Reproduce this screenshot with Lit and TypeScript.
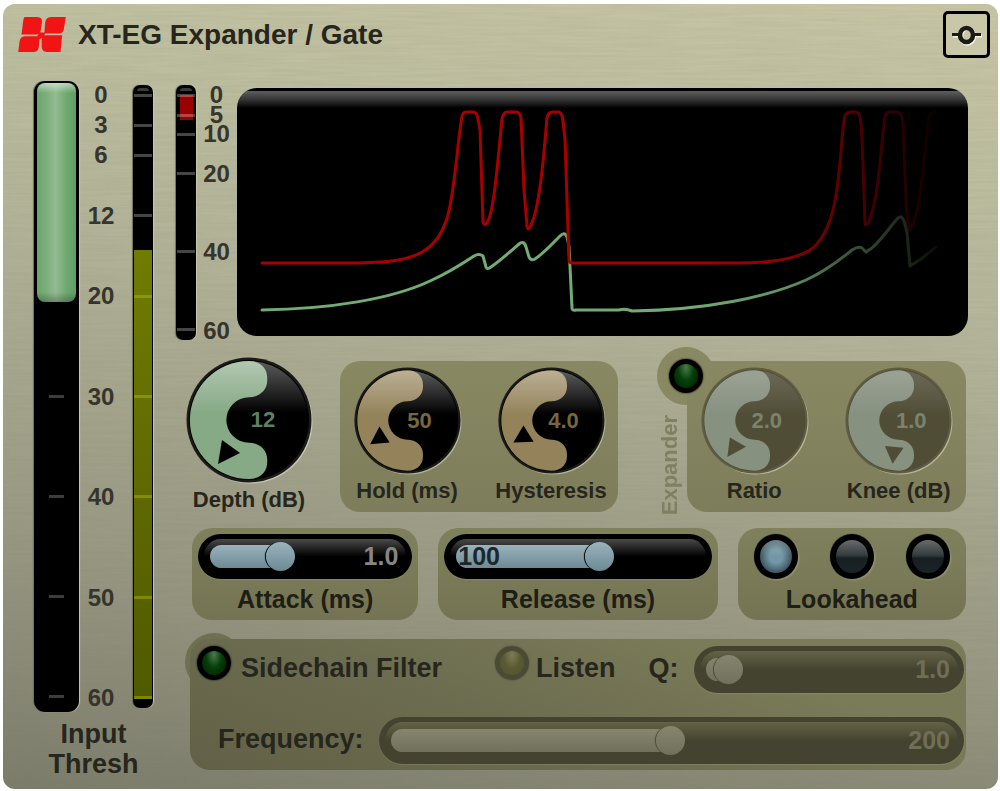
import { LitElement, html, svg, css } from "lit";
import { customElement, property } from "lit/decorators.js";

const INPUT_SCALE = [0, 3, 6, 12, 20, 30, 40, 50, 60];
const REDUCTION_SCALE = [0, 5, 10, 20, 40, 60];

/** A vertical scale in flow: every row is as tall as the distance to the next mark. */
const scaleRows = (marks: number[], cell: (mark: number) => unknown) =>
  marks.map((mark, i) => {
    const span = i < marks.length - 1 ? marks[i + 1] - mark : 0;
    return html`<li style="flex-grow:${span}">${cell(mark)}</li>`;
  });

const scaleStyles = css`
  ul {
    display: flex;
    flex-direction: column;
    list-style: none;
    margin: 0;
    padding: 0;
  }
  li {
    flex: 0 0 0px;
    line-height: 0;
    text-align: center;
  }
`;

@customElement("level-meter")
export class LevelMeter extends LitElement {
  @property({ attribute: false }) marks: number[] = [];
  @property({ type: Number }) from = 0;
  @property({ type: Number }) to = 0;
  @property() tone = "olive";

  static styles = [
    scaleStyles,
    css`
      :host {
        display: flex;
        flex-direction: column;
        box-sizing: border-box;
        width: 20px;
        padding: 10px 1px 9px;
        background: #000;
        border-radius: 7px;
        box-shadow: 1px 0 1px #c9c9b0, -1px 0 1px #6f6f5c;
      }
      .lane {
        position: relative;
        flex: 1;
        display: flex;
        flex-direction: column;
      }
      .lane::before {
        content: "";
        position: absolute;
        top: -7px;
        left: 3px;
        right: 3px;
        height: 3px;
        border-radius: 3px 3px 0 0;
        background: #3a3a3a;
      }
      ul {
        flex: 1;
        position: relative;
      }
      .bar {
        position: absolute;
        left: 0;
        right: 0;
      }
      .olive {
        background: linear-gradient(#6f7c00, #505a00);
      }
      .red {
        left: 3px;
        right: 2px;
        background: #990000;
      }
      .tick {
        display: block;
        height: 3px;
        margin-top: -1px;
        background: rgba(255, 255, 255, 0.27);
      }
      .tick.lit {
        background: rgba(190, 200, 0, 0.4);
      }
    `,
  ];

  render() {
    const end = this.marks[this.marks.length - 1];
    const top = (this.from / end) * 100;
    const height = ((this.to - this.from) / end) * 100;
    return html`<div class="lane">
      <div class="bar ${this.tone}" style="top:${top}%;height:${height}%"></div>
      <ul>
        ${scaleRows(this.marks, (m) => {
          const lit = this.tone === "olive" && m >= this.from && m <= this.to;
          return html`<span class="tick ${lit ? "lit" : ""}"></span>`;
        })}
      </ul>
    </div>`;
  }
}

@customElement("scale-labels")
export class ScaleLabels extends LitElement {
  @property({ attribute: false }) marks: number[] = [];

  static styles = [
    scaleStyles,
    css`
      :host {
        display: flex;
        flex-direction: column;
        font-size: 24px;
        color: #35352b;
      }
      ul {
        flex: 1;
      }
    `,
  ];

  render() {
    return html`<ul>
      ${scaleRows(this.marks, (m) => html`<span>${m}</span>`)}
    </ul>`;
  }
}

@customElement("threshold-slider")
export class ThresholdSlider extends LitElement {
  @property({ type: Number }) value = 20;

  static styles = [
    scaleStyles,
    css`
      :host {
        position: relative;
        display: flex;
        flex-direction: column;
        box-sizing: border-box;
        width: 45px;
        padding: 14px 15px;
        background: #000;
        border-radius: 11px;
        box-shadow: 1px 0 1px #c9c9b0, -1px 0 1px #6f6f5c;
      }
      ul {
        flex: 1;
      }
      .tick {
        display: block;
        height: 3px;
        margin-top: -1px;
        background: #3c3c3c;
      }
      .grip {
        position: absolute;
        top: 2px;
        left: 3px;
        right: 3px;
        border-radius: 8px;
        background: linear-gradient(rgba(255, 255, 255, 0.5), transparent 10px),
          linear-gradient(transparent calc(100% - 10px), rgba(0, 0, 0, 0.25)),
          linear-gradient(90deg, #6aa56e, #78ad79 20%, #93ba91 48%, #6faa70 75%, #5f9e64);
      }
      input {
        position: absolute;
        inset: 0;
        width: 100%;
        height: 100%;
        margin: 0;
        opacity: 0;
        writing-mode: vertical-lr;
        cursor: pointer;
      }
    `,
  ];

  render() {
    return html`<ul>
        ${scaleRows(INPUT_SCALE, (m) => (m > 20 ? html`<span class="tick"></span>` : ""))}
      </ul>
      <div class="grip" style="height:${(this.value / 60) * 95.7 + 2.8}%"></div>
      <input
        type="range"
        aria-label="Input Thresh"
        min="0"
        max="60"
        .value=${String(this.value)}
        @input=${(e: Event) => (this.value = Number((e.target as HTMLInputElement).value))}
      />`;
  }
}

@customElement("dial-knob")
export class DialKnob extends LitElement {
  @property() label = "";
  @property() value = "";
  @property() tone = "green";
  @property() pointer = "";
  @property({ type: Boolean, reflect: true }) large = false;
  @property({ type: Boolean, reflect: true }) off = false;

  static styles = css`
    :host {
      display: flex;
      flex-direction: column;
      align-items: center;
      --size: 107px;
      --body: #000;
      --rim: #1b1b17;
      --gloss: 0.36;
      color: #26261d;
    }
    :host([large]) {
      --size: 126px;
    }
    :host([off]) {
      --body: #504d37;
      --rim: #5f5c42;
      --gloss: 0.16;
    }
    .dial {
      position: relative;
      width: var(--size);
      height: var(--size);
    }
    svg {
      display: block;
      width: 100%;
      height: 100%;
      overflow: visible;
    }
    .shine {
      fill: #e6e6d8;
      opacity: 0.55;
    }
    .rim {
      fill: var(--rim);
    }
    .body {
      fill: var(--body);
    }
    .green {
      fill: #86a986;
      color: #5d8066;
    }
    .tan {
      fill: #94835a;
      color: #77673f;
    }
    .blue {
      fill: #879180;
      color: #7b836e;
    }
    .gloss-stop {
      stop-color: #fff;
      stop-opacity: var(--gloss);
    }
    output {
      position: absolute;
      inset: 0 0 0 25px;
      display: grid;
      place-items: center;
      font-size: 22px;
    }
    :host([large]) output {
      left: 28px;
    }
    input {
      position: absolute;
      inset: 0;
      width: 100%;
      height: 100%;
      margin: 0;
      opacity: 0;
    }
    label {
      font-size: 22px;
      line-height: 34px;
      white-space: nowrap;
    }
  `;

  render() {
    return html`<div class="dial">
        <svg viewBox="-63 -63 126 126" aria-hidden="true">
          <defs>
            <linearGradient id="gloss" x1="0" y1="0" x2="0" y2="1">
              <stop offset="0" class="gloss-stop" />
              <stop offset="0.44" stop-color="#fff" stop-opacity="0" />
            </linearGradient>
          </defs>
          <circle class="shine" cx="1.5" cy="1.5" r="62" />
          <circle class="rim" r="62.5" />
          <circle class="body" r="60" />
          <path
            class=${this.tone}
            transform="scale(0.985)"
            d="M0-60A60 60 0 0 0 0 60C12 60 18.5 52 18.5 43V40C18.5 30 10 23 0 23A23 23 0 0 1 0-23C10-23 18.5-30 18.5-40V-43C18.5-52 12-60 0-60Z"
          />
          <polygon class="body" points=${this.pointer} />
          <circle r="59" fill="url(#gloss)" />
        </svg>
        <output class=${this.tone} for="dial">${this.value}</output>
        <input id="dial" type="range" max="1000" step="any" .value=${this.value} ?disabled=${this.off} />
      </div>
      <label for="dial">${this.label}</label>`;
  }
}

@customElement("pill-slider")
export class PillSlider extends LitElement {
  @property() label = "";
  @property() value = "";
  @property({ type: Number }) position = 0;
  @property({ type: Boolean, reflect: true }) off = false;
  @property({ type: Boolean, reflect: true }) start = false;

  static styles = css`
    :host {
      position: relative;
      display: block;
      --height: 45px;
      --case: #000;
      --sheen: #4a4a4a;
      --fill-top: #9ab3bc;
      --fill-bottom: #6c8a95;
      --edge: #0d1214;
      color: #868686;
    }
    :host([off]) {
      --height: 47px;
      --case: #44432f;
      --sheen: #646349;
      --fill-top: #86866f;
      --fill-bottom: #70705c;
      --edge: #50503c;
      color: #6f6f57;
    }
    :host([start]) {
      color: #1c272b;
    }
    input {
      appearance: none;
      -webkit-appearance: none;
      display: block;
      box-sizing: border-box;
      width: 100%;
      height: var(--height);
      margin: 0;
      border: 5px solid var(--case);
      border-left-width: 6px;
      border-right-width: 6px;
      padding: 0 6px;
      border-radius: 24px;
      background: linear-gradient(var(--sheen), var(--case) 50%);
      background-color: var(--case);
      box-shadow: 0 1px 1px rgba(220, 220, 190, 0.15);
    }
    input::-webkit-slider-runnable-track {
      height: 23px;
      border-radius: 12px;
      background: linear-gradient(var(--fill-top), var(--fill-bottom)) no-repeat;
      background-size: calc(var(--at) * (100% - 29px) + 10px) 100%;
    }
    input::-webkit-slider-thumb {
      -webkit-appearance: none;
      width: 29px;
      height: 29px;
      margin-top: -3px;
      border-radius: 50%;
      background: linear-gradient(var(--fill-top), var(--fill-bottom));
      box-shadow: -2px 0 0 -1px var(--edge), -1px 0 1px 0 var(--edge);
    }
    output {
      position: absolute;
      inset: 0 14px;
      display: flex;
      align-items: center;
      justify-content: flex-end;
      font-size: 25px;
      pointer-events: none;
    }
    :host([start]) output {
      justify-content: flex-start;
    }
  `;

  render() {
    return html`<input
        type="range"
        min="0"
        max="1"
        step="any"
        aria-label=${this.label}
        .value=${String(this.position)}
        ?disabled=${this.off}
        style="--at:${this.position}"
        @input=${(e: Event) => (this.position = Number((e.target as HTMLInputElement).value))}
      />
      <output>${this.value}</output>`;
  }
}

@customElement("envelope-display")
export class EnvelopeDisplay extends LitElement {
  static styles = css`
    :host {
      display: block;
      height: 248px;
      border-radius: 20px;
      overflow: hidden;
      background: linear-gradient(#000 3px, #5e5e5e 3px, #333 12px, #000 20px);
    }
    svg {
      display: block;
      width: 100%;
      height: 100%;
    }
    path {
      fill: none;
      stroke-width: 3px;
      stroke-linejoin: round;
      stroke-linecap: round;
      vector-effect: non-scaling-stroke;
    }
  `;

  private fade(id: string, color: string) {
    return svg`<linearGradient id=${id} gradientUnits="userSpaceOnUse" x1="690" y1="0" x2="938" y2="0">
      <stop offset="0" stop-color=${color} />
      <stop offset="0.4" stop-color=${color} stop-opacity="0.85" />
      <stop offset="0.64" stop-color=${color} stop-opacity="0.5" />
      <stop offset="0.88" stop-color=${color} stop-opacity="0.22" />
      <stop offset="1" stop-color=${color} stop-opacity="0.06" />
    </linearGradient>`;
  }

  render() {
    return html`<svg viewBox="237 88 731 248" preserveAspectRatio="none" role="img" aria-label="Signal envelope">
      <defs>${this.fade("low", "#72ab74")}${this.fade("high", "#a80000")}</defs>
      <path
        stroke="url(#low)"
        d="M262 310C330 309 392 299 430 281C450 272 462 264 474 256Q479 253 483 256L486 267Q487 270 491 267C501 260 511 251 519 244Q524 240 526 247L529 257Q531 261 535 259C545 252 553 243 560 236Q565 231 567 237L569 246L572 308Q572 311 576 310H619Q625 308 632 311C706 310 768 297 806 280C828 270 842 258 852 250Q859 246 862 248L866 252L872 248C882 239 890 227 897 219Q901 214 904 221L907 232L910 266L921 259L936 247"
      />
      <path
        stroke="url(#high)"
        d="M262 263H345C378 263 405 262 422 252C436 244 443 232 448 215C455 188 457 146 462 116Q463 112 467 112H473Q477 112 478 119L480 130L483 222Q484 226 487 223C494 213 498 158 502 119Q503 112 508 112H516Q520 112 521 118L524 190L527 226Q528 232 531 225C540 207 544 152 547 118Q548 112 553 112H559Q562 113 563 121L565 140L569 260Q569 263 573 263H737C775 263 800 258 813 248C825 237 832 221 836 195C841 165 841 143 844 120Q845 112 851 112H856Q860 112 861 124L862 137L865 223Q866 228 869 221C878 203 881 145 885 117Q886 112 890 112H897Q902 112 903 123L906 200Q907 224 910 230C919 220 924 162 928 123Q929 112 935 112"
      />
    </svg>`;
  }
}

@customElement("app-root")
export class AppRoot extends LitElement {
  static styles = css`
    :host {
      display: flex;
      box-sizing: border-box;
      min-height: 100vh;
      padding: 4px 2px 2px 3px;
      background: #fff;
      font-family: "Liberation Sans", Arial, sans-serif;
      font-weight: bold;
      color: #26261d;
    }
    .plate {
      position: relative;
      flex: 1;
      display: flex;
      flex-direction: column;
      border-radius: 12px;
      overflow: hidden;
      background: linear-gradient(188deg, #c7c7a6, #b3b399 38%, #989883 72%, #7c7c6b);
    }
    .grain {
      position: absolute;
      inset: 0;
      width: 100%;
      height: 100%;
      pointer-events: none;
    }
    header {
      position: relative;
      display: flex;
      align-items: center;
      gap: 12px;
      padding: 7px 8px 23px 15px;
    }
    .logo {
      width: 48px;
      height: 35px;
    }
    h1 {
      flex: 1;
      margin: 0;
      font-size: 28px;
      line-height: 32px;
    }
    .bypass {
      box-sizing: border-box;
      width: 47px;
      height: 47px;
      padding: 0;
      border: 3px solid #000;
      border-radius: 5px;
      background: #c8c8a9;
    }
    .bypass svg {
      display: block;
      width: 100%;
      height: 100%;
    }
    .body {
      position: relative;
      flex: 1;
      display: grid;
      grid-template-columns: 119px minmax(0, 1fr);
      column-gap: 23px;
      padding: 0 30px 10px 31px;
    }
    .input {
      display: flex;
      flex-direction: column;
    }
    .tracks {
      flex: 1;
      display: grid;
      grid-template-columns: 45px 1fr 20px;
    }
    .tracks scale-labels {
      margin: 14px 10px 14px 0;
    }
    .tracks level-meter {
      margin: 4px 0;
    }
    .caption {
      margin: 7px 0 0;
      font-size: 27px;
      line-height: 30px;
      text-align: center;
    }
    .controls {
      display: flex;
      flex-direction: column;
      padding: 4px 0 9px;
    }
    .scope {
      display: grid;
      grid-template-columns: 20px 27px minmax(0, 1fr);
      column-gap: 7px;
      height: 255px;
    }
    .scope scale-labels {
      margin: 10px 0 9px;
    }
    .scope envelope-display {
      margin-top: 3px;
    }
    .knobs {
      display: grid;
      grid-template-columns: 126px minmax(0, 278fr) minmax(0, 320fr);
      column-gap: 28px;
      margin: 17px 2px 0 10px;
    }
    .group {
      background: linear-gradient(#888862, #7d7d5b);
      border-radius: 20px;
    }
    .pair {
      flex: 1;
      display: grid;
      grid-template-columns: 1fr 1fr;
      gap: 10px;
      margin: 4px 0 5px;
      padding: 6px 0 4px;
    }
    .expander {
      position: relative;
      display: flex;
      padding-left: 11px;
    }
    .side {
      width: 30px;
      display: flex;
      align-items: flex-end;
      padding-bottom: 2px;
      box-sizing: border-box;
    }
    .side label {
      writing-mode: vertical-rl;
      rotate: 180deg;
      font-size: 22px;
      line-height: 26px;
      color: #7f7f62;
    }
    .lobe {
      position: absolute;
      display: grid;
      place-items: center;
      width: 58px;
      height: 58px;
      border-radius: 50%;
      background: #888862;
    }
    .lobe.clear {
      background: none;
    }
    .expander .lobe {
      top: -10px;
      left: 11px;
    }
    .expander .group {
      position: relative;
    }
    .led {
      appearance: none;
      box-sizing: border-box;
      flex: none;
      width: 34px;
      height: 34px;
      margin: 0;
      border: 5px solid #000;
      border-radius: 50%;
      background: radial-gradient(ellipse at 50% 15%, #4b7a4b, #06400a 45%, #012b02 80%);
      box-shadow: 0 0 2px #000;
    }
    .led.dim {
      border-color: #4b4a35;
      background: radial-gradient(ellipse at 50% 15%, #7c7c59, #5a5a32 50%, #55552d);
      box-shadow: 0 0 2px #4b4a35;
    }
    .times {
      display: grid;
      grid-template-columns: 226fr 279fr 228fr;
      column-gap: 20px;
      margin: 11px 2px 0 16px;
    }
    .cell {
      padding: 6px 6px 0;
      min-width: 0;
      background: linear-gradient(#7f805c, #747454);
      text-align: center;
      font-size: 25px;
      line-height: 41px;
      color: #1e1e14;
    }
    .choices {
      display: flex;
      justify-content: space-between;
      padding: 0 10px;
    }
    .choices input {
      appearance: none;
      box-sizing: border-box;
      width: 44px;
      height: 45px;
      margin: 0;
      border: 6px solid #000;
      border-radius: 50%;
      background: linear-gradient(rgba(255, 255, 255, 0.36), rgba(255, 255, 255, 0.14) 45%, transparent 56%),
        linear-gradient(#11181b, #1c2427);
      box-shadow: 1px 1px 2px rgba(220, 220, 190, 0.4), 0 0 1px #000;
    }
    .choices input:checked {
      background: linear-gradient(rgba(255, 255, 255, 0.24), transparent 50%),
        radial-gradient(closest-side, #7397a6 40%, #3c5560);
    }
    .sidechain {
      position: relative;
      margin: 19px 2px 0 14px;
    }
    .filter {
      position: relative;
      display: flex;
      flex-direction: column;
      gap: 24px;
      padding: 7px 2px 6px 7px;
      background: linear-gradient(20deg, #626147, #6c6c50 40%, #7a7b58 75%);
      font-size: 27px;
    }
    .sidechain .lobe {
      top: -6px;
      left: -5px;
      background: #6f6f52;
    }
    .row {
      display: flex;
      align-items: flex-start;
    }
    .row label {
      line-height: 44px;
      white-space: nowrap;
    }
    .name {
      width: 254px;
      margin-left: 10px;
    }
    .listen {
      margin: 0 33px 0 7px;
    }
    .q,
    .frequency {
      margin-right: 15px;
    }
    .row pill-slider {
      flex: 1;
    }
    .indent {
      padding-left: 21px;
    }
  `;

  render() {
    return html`<main class="plate">
      <svg class="grain" aria-hidden="true">
        <filter id="brushed" x="0" y="0" width="100%" height="100%">
          <feTurbulence type="fractalNoise" baseFrequency="0.015 0.35" numOctaves="3" seed="4" />
          <feColorMatrix values="0 0 0 0 0.2  0 0 0 0 0.2  0 0 0 0 0.12  0.5 0 0 0 -0.16" />
        </filter>
        <rect width="100%" height="100%" filter="url(#brushed)" opacity="0.35" />
      </svg>
      <header>
        <svg class="logo" viewBox="54 48 144 106" aria-hidden="true">
          <g fill="#f01414">
            <path d="M74 48H112Q127 49 126 62L122 90Q120 101 108 101H64L69 60Q71 48 74 48Z" />
            <path d="M153 48H198L192 85Q189 98 177 98H133L136 63Q138 49 153 48Z" />
            <path d="M74 106H119L116 140Q113 154 100 154H54L58 122Q60 107 74 106Z" />
            <path d="M134 103H187L182 154H140Q126 152 125 138V114Q126 104 134 103Z" />
            <path d="M119 94L136 96L131 108L118 116L112 104Z" />
          </g>
        </svg>
        <h1>XT-EG Expander / Gate</h1>
        <button class="bypass" type="button" aria-label="Bypass">
          <svg viewBox="0 0 41 41" fill="none">
            <path stroke="#f4f4e8" stroke-width="3" d="M7 22H14M28 22H36" />
            <ellipse stroke="#f4f4e8" stroke-width="4.500" cx="21.500" cy="22" rx="6.500" ry="7.500" />
            <path stroke="#1b1b16" stroke-width="3" d="M6 20.500H13M27 20.500H35" />
            <ellipse stroke="#1b1b16" stroke-width="4.500" cx="20.500" cy="21" rx="6.500" ry="7" />
          </svg>
        </button>
      </header>
      <div class="body">
        <section class="input">
          <div class="tracks">
            <threshold-slider value="20"></threshold-slider>
            <scale-labels .marks=${INPUT_SCALE}></scale-labels>
            <level-meter .marks=${INPUT_SCALE} from="15.4" to="60"></level-meter>
          </div>
          <p class="caption">Input<br />Thresh</p>
        </section>

        <section class="controls">
          <div class="scope">
            <level-meter .marks=${REDUCTION_SCALE} from="0" to="6.3" tone="red"></level-meter>
            <scale-labels .marks=${REDUCTION_SCALE}></scale-labels>
            <envelope-display></envelope-display>
          </div>

          <div class="knobs">
            <dial-knob large label="Depth (dB)" value="12" tone="green" pointer="-27,20 -9,33 -31,44"></dial-knob>
            <div class="group pair">
              <dial-knob label="Hold (ms)" value="50" tone="tan" pointer="-33,7 -21,26 -44,28"></dial-knob>
              <dial-knob label="Hysteresis" value="4.0" tone="tan" pointer="-33,6 -21,25 -45,26"></dial-knob>
            </div>
            <div class="expander">
              <div class="side"><label for="expander">Expander</label></div>
              <div class="lobe"></div>
              <div class="group pair">
                <dial-knob off label="Ratio" value="2.0" tone="blue" pointer="-29,20 -10,31 -32,43"></dial-knob>
                <dial-knob off label="Knee (dB)" value="1.0" tone="blue" pointer="-16,30 6,32 -7,51"></dial-knob>
              </div>
              <div class="lobe clear">
                <input id="expander" class="led" type="checkbox" />
              </div>
            </div>
          </div>

          <div class="times">
            <div class="group cell">
              <pill-slider label="Attack (ms)" value="1.0" position="0.345"></pill-slider>
              Attack (ms)
            </div>
            <div class="group cell">
              <pill-slider start label="Release (ms)" value="100" position="0.6"></pill-slider>
              Release (ms)
            </div>
            <div class="group cell" role="radiogroup" aria-labelledby="look">
              <div class="choices">
                <input type="radio" name="look" aria-label="Lookahead 1" checked />
                <input type="radio" name="look" aria-label="Lookahead 2" />
                <input type="radio" name="look" aria-label="Lookahead 3" />
              </div>
              <span id="look">Lookahead</span>
            </div>
          </div>

          <div class="sidechain">
            <div class="lobe"></div>
            <div class="group filter">
              <div class="row">
                <input id="sidechain" class="led" type="checkbox" />
                <label class="name" for="sidechain">Sidechain Filter</label>
                <input id="listen" class="led dim" type="checkbox" disabled />
                <label class="listen" for="listen">Listen</label>
                <label class="q" for="q">Q:</label>
                <pill-slider id="q" off label="Q" value="1.0" position="0.04"></pill-slider>
              </div>
              <div class="row indent">
                <label class="frequency" for="frequency">Frequency:</label>
                <pill-slider id="frequency" off label="Frequency" value="200" position="0.498"></pill-slider>
              </div>
            </div>
          </div>
        </section>
      </div>
    </main>`;
  }
}
